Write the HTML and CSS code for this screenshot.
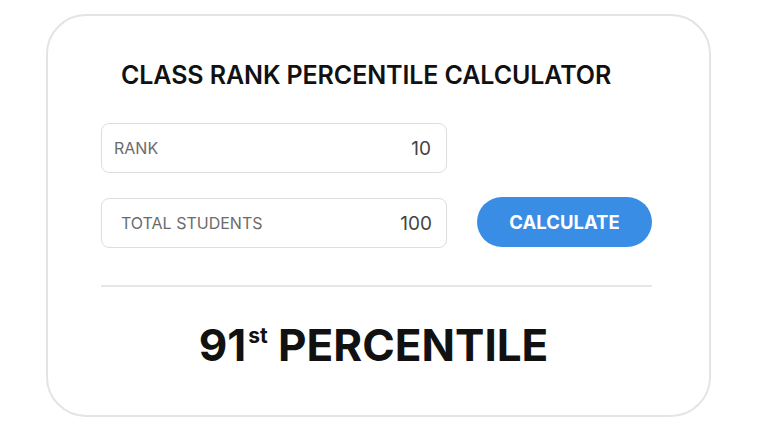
FILE: index.html
```html
<!DOCTYPE html>
<html>
<head>
<meta charset="utf-8">
<link rel="stylesheet" href="styles.css">
</head>
<body>
<div class="card">
  <h1 class="title">CLASS RANK PERCENTILE CALCULATOR</h1>
  <div class="form">
    <div class="fields">
      <div class="field field-rank"><span class="label">RANK</span><span class="value">10</span></div>
      <div class="field field-total"><span class="label">TOTAL STUDENTS</span><span class="value">100</span></div>
    </div>
    <button class="calc">CALCULATE</button>
  </div>
  <div class="divider"></div>
  <div class="result">91<sup class="ord">st</sup> PERCENTILE</div>
</div>
</body>
</html>
```
FILE: styles.css
```css
html, body {
  margin: 0;
  padding: 0;
  background: #ffffff;
}
body {
  width: 768px;
  height: 432px;
  overflow: hidden;
  font-family: Inter, "Liberation Sans", sans-serif;
}
.card {
  box-sizing: border-box;
  margin: 14px 0 0 46px;
  width: 665px;
  height: 403px;
  border: 2px solid #e4e4e4;
  border-radius: 40px;
  padding: 0 57px 0 53px;
  display: flex;
  flex-direction: column;
}
.title {
  margin: 44px 0 0 20px;
  font-size: 25px;
  font-weight: 600;
  line-height: 30px;
  color: #111;
  letter-spacing: -0.1px;
  white-space: nowrap;
}
.form {
  margin-top: 33px;
  display: flex;
  align-items: flex-end;
  gap: 30px;
}
.fields {
  display: flex;
  flex-direction: column;
  gap: 25px;
  width: 346px;
}
.field {
  box-sizing: border-box;
  height: 50px;
  border: 1.5px solid #dedede;
  border-radius: 8px;
  display: flex;
  align-items: center;
  justify-content: space-between;
  padding: 0 15px 0 12px;
}
.field-total {
  padding-left: 19px;
  padding-right: 14px;
}
.label {
  font-size: 16px;
  color: #6b6b6b;
}
.value {
  font-size: 19px;
  color: #444;
}
.calc {
  width: 175px;
  height: 50px;
  border: none;
  border-radius: 25px;
  background: #3a8de5;
  color: #fff;
  font-family: Inter, "Liberation Sans", sans-serif;
  font-size: 18.5px;
  font-weight: 700;
  margin-bottom: 1px;
}
.divider {
  margin-top: 37px;
  height: 2px;
  background: #e6e6e6;
}
.result {
  margin-top: 32px;
  text-align: center;
  font-size: 44px;
  font-weight: 700;
  line-height: 52px;
  color: #111;
  padding-right: 6px;
}
.ord {
  font-size: 21px;
  vertical-align: 18px;
  line-height: 0;
  margin-left: 2px;
}
```
